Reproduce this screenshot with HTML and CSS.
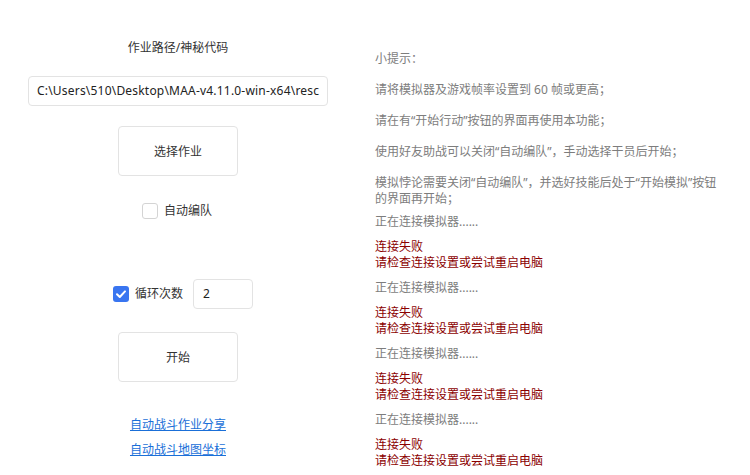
FILE: index.html
```html
<!DOCTYPE html>
<html lang="zh-CN">
<head>
<meta charset="utf-8">
<link rel="stylesheet" href="styles.css">
</head>
<body>
<div class="page">
  <div class="left">
    <div class="title">作业路径/神秘代码</div>
    <div class="path-input">C:\Users\510\Desktop\MAA-v4.11.0-win-x64\resc</div>
    <div class="btn btn-select">选择作业</div>
    <div class="check-row auto-row">
      <span class="box"></span>
      <span class="label">自动编队</span>
    </div>
    <div class="check-row loop-row">
      <span class="box checked">
        <svg width="16" height="16" viewBox="0 0 16 16"><path d="M4 8.2 L6.8 11 L12 5.4" fill="none" stroke="#fff" stroke-width="2" stroke-linecap="round" stroke-linejoin="round"/></svg>
      </span>
      <span class="label">循环次数</span>
      <span class="num-input">2</span>
    </div>
    <div class="btn btn-start">开始</div>
    <a class="link link-first" href="#">自动战斗作业分享</a>
    <a class="link" href="#">自动战斗地图坐标</a>
  </div>
  <div class="right">
    <div class="tips">小提示：

请将模拟器及游戏帧率设置到 60 帧或更高；

请在有“开始行动”按钮的界面再使用本功能；

使用好友助战可以关闭“自动编队”，手动选择干员后开始；

模拟悖论需要关闭“自动编队”，并选好技能后处于“开始模拟”按钮的界面再开始；</div>
    <div class="log gray">正在连接模拟器......</div>
    <div class="log red">连接失败<br>请检查连接设置或尝试重启电脑</div>
    <div class="log gray">正在连接模拟器......</div>
    <div class="log red">连接失败<br>请检查连接设置或尝试重启电脑</div>
    <div class="log gray">正在连接模拟器......</div>
    <div class="log red">连接失败<br>请检查连接设置或尝试重启电脑</div>
    <div class="log gray">正在连接模拟器......</div>
    <div class="log red">连接失败<br>请检查连接设置或尝试重启电脑</div>
  </div>
</div>
</body>
</html>
```
FILE: styles.css
```css
html, body {
  margin: 0;
  padding: 0;
  background: #fff;
  overflow: hidden;
}
body {
  width: 750px;
  height: 475px;
  font-family: "Microsoft YaHei", "Noto Sans", "Noto Sans CJK SC", sans-serif;
  font-size: 12px;
  color: #333;
}
.page {
  display: flex;
  height: 475px;
  overflow: hidden;
}
.left {
  width: 356px;
  flex: none;
  display: flex;
  flex-direction: column;
  align-items: center;
  padding-top: 40px;
}
.title {
  line-height: 16px;
  height: 16px;
  color: #333;
}
.path-input {
  margin-top: 20px;
  width: 300px;
  height: 30px;
  box-sizing: border-box;
  border: 1px solid #e3e3e3;
  border-radius: 4px;
  padding: 0 8px;
  line-height: 28px;
  font-size: 12px;
  letter-spacing: 0.2px;
  color: #222;
  white-space: nowrap;
  overflow: hidden;
}
.btn {
  width: 120px;
  height: 50px;
  box-sizing: border-box;
  border: 1px solid #e3e3e3;
  border-radius: 4px;
  display: flex;
  align-items: center;
  justify-content: center;
  color: #333;
  background: #fff;
}
.btn-select {
  margin-top: 20px;
}
.check-row {
  display: flex;
  align-items: center;
}
.auto-row {
  margin-top: 27px;
  margin-left: -2px;
}
.box {
  width: 16px;
  height: 16px;
  box-sizing: border-box;
  border: 1px solid #d4d4d4;
  border-radius: 3px;
  background: #fff;
  display: flex;
}
.box.checked {
  border: none;
  background: #3975f0;
}
.label {
  margin-left: 6px;
  line-height: 16px;
  color: #333;
}
.loop-row {
  margin-top: 60px;
  height: 30px;
  margin-left: 10px;
}
.num-input {
  margin-left: 10px;
  width: 60px;
  height: 30px;
  box-sizing: border-box;
  border: 1px solid #e3e3e3;
  border-radius: 4px;
  padding-left: 9px;
  line-height: 28px;
  color: #222;
}
.btn-start {
  margin-top: 23px;
}
.link {
  color: #1a6fd8;
  text-decoration: underline;
  line-height: 16px;
  margin-top: 9px;
}
.link-first {
  margin-top: 35px;
}
.right {
  flex: 1;
  padding-top: 51px;
  padding-left: 19px;
  padding-right: 24px;
}
.tips {
  white-space: pre-wrap;
  line-height: 15.5px;
  color: #7d7d7d;
  margin-bottom: 8px;
}
.log {
  line-height: 16px;
  margin-bottom: 9px;
}
.gray {
  color: #7d7d7d;
}
.red {
  color: #8b0000;
}
```
